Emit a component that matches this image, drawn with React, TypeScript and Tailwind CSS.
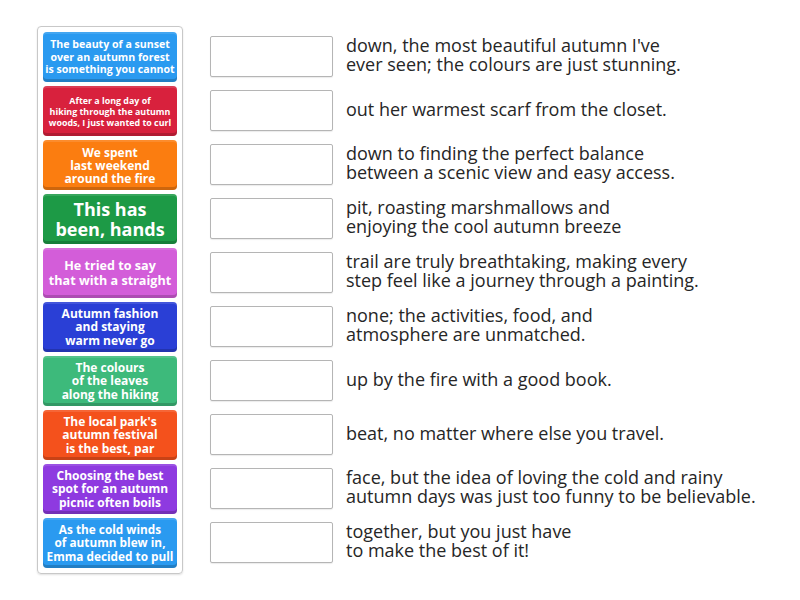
import React from "react";

const tiles: { text: string[]; bg: string; size: string }[] = [
  { text: ["The beauty of a sunset", "over an autumn forest", "is something you cannot"], bg: "bg-[#2a9af0]", size: "text-[10.6px] leading-[12.5px]" },
  { text: ["After a long day of", "hiking through the autumn", "woods, I just wanted to curl"], bg: "bg-[#d8213d]", size: "text-[8.9px] leading-[11px]" },
  { text: ["We spent", "last weekend", "around the fire"], bg: "bg-[#fb7d10]", size: "text-[12px] leading-[13px]" },
  { text: ["This has", "been, hands"], bg: "bg-[#1d9a46]", size: "text-[18px] leading-[20px]" },
  { text: ["He tried to say", "that with a straight"], bg: "bg-[#d35dd9]", size: "text-[12.6px] leading-[15px]" },
  { text: ["Autumn fashion", "and staying", "warm never go"], bg: "bg-[#2a3fd6]", size: "text-[12px] leading-[13.5px]" },
  { text: ["The colours", "of the leaves", "along the hiking"], bg: "bg-[#3dba7b]", size: "text-[12px] leading-[13.5px]" },
  { text: ["The local park's", "autumn festival", "is the best, par"], bg: "bg-[#f4511c]", size: "text-[12px] leading-[13.5px]" },
  { text: ["Choosing the best", "spot for an autumn", "picnic often boils"], bg: "bg-[#8e3ae0]", size: "text-[12px] leading-[13.5px]" },
  { text: ["As the cold winds", "of autumn blew in,", "Emma decided to pull"], bg: "bg-[#2a9af0]", size: "text-[11.8px] leading-[13.5px]" },
];

const answers: string[][] = [
  ["down, the most beautiful autumn I've", "ever seen; the colours are just stunning."],
  ["out her warmest scarf from the closet."],
  ["down to finding the perfect balance", "between a scenic view and easy access."],
  ["pit, roasting marshmallows and", "enjoying the cool autumn breeze"],
  ["trail are truly breathtaking, making every", "step feel like a journey through a painting."],
  ["none; the activities, food, and", "atmosphere are unmatched."],
  ["up by the fire with a good book."],
  ["beat, no matter where else you travel."],
  ["face, but the idea of loving the cold and rainy", "autumn days was just too funny to be believable."],
  ["together, but you just have", "to make the best of it!"],
];

export default function App() {
  return (
    <div className="w-[800px] h-[600px] bg-white flex items-start pl-[37px] pt-[26px] font-['Open_Sans','Noto_Sans',sans-serif]">
      <div className="w-[146px] border border-[#c8c8c8] rounded-[4px] px-[5px] pt-[5px] pb-[5px] flex flex-col gap-[4px] shadow-[0_1px_2px_rgba(0,0,0,0.12)]">
        {tiles.map((t, i) => (
          <div
            key={i}
            className={`${t.bg} h-[50px] rounded-[4px] flex flex-col items-center justify-center text-white font-bold text-center ${t.size} shadow-[inset_0_-3px_0_rgba(0,0,0,0.18),inset_0_2px_0_rgba(255,255,255,0.12)] whitespace-nowrap`}
          >
            {t.text.map((l, j) => (
              <span key={j}>{l}</span>
            ))}
          </div>
        ))}
      </div>
      <div className="ml-[27px] mt-[5px] flex flex-col gap-[4px]">
        {answers.map((a, i) => (
          <div key={i} className="h-[50px] flex items-center">
            <div className="w-[123px] h-[41px] border border-[#b5b5b5] rounded-[2px] bg-white shadow-[0_1px_1px_rgba(0,0,0,0.08)]" />
            <div className="ml-[13px] text-[18px] leading-[19px] text-[#262626] -mt-[2px]">
              {a.map((l, j) => (
                <div key={j} className="whitespace-nowrap">{l}</div>
              ))}
            </div>
          </div>
        ))}
      </div>
    </div>
  );
}
